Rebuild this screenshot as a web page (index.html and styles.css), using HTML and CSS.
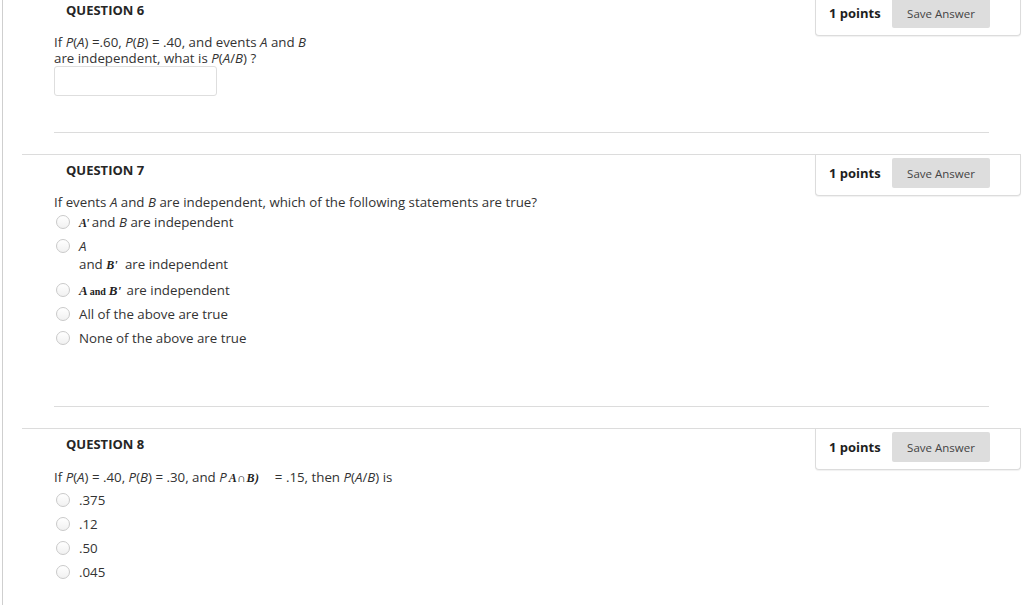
FILE: index.html
```html
<!DOCTYPE html>
<html>
<head>
<meta charset="utf-8">
<link rel="stylesheet" href="styles.css">
</head>
<body>
<div class="page">
  <section class="question first">
    <div class="q-head">
      <h2 class="q-title">QUESTION 6</h2>
      <div class="points"><span class="pts">1 points</span><button class="save">Save Answer</button></div>
    </div>
    <div class="q-body">
      <p class="q-text">If <i>P</i>(<i>A</i>) =.60, <i>P</i>(<i>B</i>) = .40, and events <i>A</i> and <i>B</i><br>are independent, what is <i>P</i>(<i>A</i>/<i>B</i>) ?</p>
      <div class="answer-input"></div>
    </div>
    <hr class="sep">
  </section>

  <section class="question">
    <div class="q-head">
      <h2 class="q-title">QUESTION 7</h2>
      <div class="points"><span class="pts">1 points</span><button class="save">Save Answer</button></div>
    </div>
    <div class="q-body">
      <p class="q-text">If events <i>A</i> and <i>B</i> are independent, which of the following statements are true?</p>
      <ul class="options">
        <li class="opt"><span class="radio"></span><span class="opt-text"><span class="m m1">A'</span> and <i>B</i> are independent</span></li>
        <li class="opt"><span class="radio"></span><span class="opt-text"><span class="line-a"><i>A</i></span><span class="line-b">and <span class="m m2">B'</span> are independent</span></span></li>
        <li class="opt"><span class="radio"></span><span class="opt-text"><span class="m m3">A<span class="m-and">and</span>B'</span> are independent</span></li>
        <li class="opt"><span class="radio"></span><span class="opt-text">All of the above are true</span></li>
        <li class="opt"><span class="radio"></span><span class="opt-text">None of the above are true</span></li>
      </ul>
    </div>
    <hr class="sep">
  </section>

  <section class="question">
    <div class="q-head">
      <h2 class="q-title">QUESTION 8</h2>
      <div class="points"><span class="pts">1 points</span><button class="save">Save Answer</button></div>
    </div>
    <div class="q-body">
      <p class="q-text tall">If <i>P</i>(<i>A</i>) = .40, <i>P</i>(<i>B</i>) = .30, and <i>P</i><span class="m m4">A∩B)</span> = .15, then <i>P</i>(<i>A</i>/<i>B</i>) is</p>
      <ul class="options">
        <li class="opt"><span class="radio"></span><span class="opt-text">.375</span></li>
        <li class="opt"><span class="radio"></span><span class="opt-text">.12</span></li>
        <li class="opt"><span class="radio"></span><span class="opt-text">.50</span></li>
        <li class="opt"><span class="radio"></span><span class="opt-text">.045</span></li>
      </ul>
    </div>
  </section>
</div>
</body>
</html>
```

FILE: styles.css
```css
html, body {
  margin: 0;
  padding: 0;
  background: #fff;
}
body {
  font-family: "Open Sans", "Liberation Sans", sans-serif;
  font-size: 13.3px;
  color: #333;
  overflow: hidden;
}
.page {
  margin-left: 2px;
  border-left: 1px solid #cfcfcf;
  min-height: 640px;
}
.question {
  margin: 0 3px 0 19px;
  border-top: 1px solid #dcdcdc;
}
.question.first {
  margin-top: -6px;
}
.q-head {
  display: flex;
  justify-content: space-between;
  align-items: flex-start;
  height: 39px;
}
.q-title {
  margin: 0;
  padding: 6px 0 0 44px;
  font-size: 13px;
  line-height: 18px;
  font-weight: 700;
  color: #262626;
}
.points {
  box-sizing: border-box;
  width: 206px;
  height: 41px;
  display: flex;
  justify-content: space-between;
  align-items: flex-start;
  padding: 3px 30px 0 13px;
  border: 1px solid #dcdcdc;
  border-top: none;
  border-radius: 0 0 4px 4px;
  box-shadow: 0 1px 1px rgba(0, 0, 0, 0.06);
  background: #fff;
  position: relative;
}
.pts {
  font-size: 13px;
  font-weight: 700;
  line-height: 30px;
  color: #1e1e1e;
}
.save {
  width: 98px;
  height: 30px;
  border: none;
  border-radius: 2px;
  background: #dddddd;
  color: #444;
  font-family: "Open Sans", "Liberation Sans", sans-serif;
  font-size: 11.5px;
  padding: 0;
}
.q-body {
  margin: 0 32px;
  padding-bottom: 36px;
}
.q-text {
  margin: 0;
  line-height: 16px;
}
.q-text.tall {
  padding: 1px 0 3px;
}
.answer-input {
  box-sizing: border-box;
  width: 163px;
  height: 30px;
  border: 1px solid #dedede;
  border-radius: 3px;
}
.options {
  list-style: none;
  margin: 0 0 20px;
  padding: 0;
}
.opt {
  display: flex;
  align-items: flex-start;
  padding: 4px 0 4px 2px;
  line-height: 16px;
  height: 16px;
}
.opt:nth-child(2) {
  height: auto;
}
.radio {
  flex: none;
  box-sizing: border-box;
  width: 14px;
  height: 14px;
  margin: 1px 9px 0 0;
  border: 1px solid #cacaca;
  border-radius: 50%;
  background: linear-gradient(#ffffff, #f1f1f1);
}
.opt-text {
  display: block;
}
.line-a, .line-b {
  display: block;
}
.line-a { line-height: 16px; height: 16px; }
.line-b { line-height: 20px; height: 20px; }
.m {
  font-family: "Liberation Serif", "DejaVu Serif", serif;
  font-weight: 700;
  font-style: italic;
  color: #222;
  line-height: 10px;
}
.m1 {
  font-size: 12px;
  letter-spacing: -1px;
}
.m2 {
  font-size: 12px;
  margin: 0 4px 0 0;
}
.m3 {
  font-size: 13px;
  margin-right: 2px;
}
.m-and {
  font-style: normal;
  font-size: 10px;
  margin: 0 3px 0 2px;
}
.m4 {
  font-size: 12px;
  letter-spacing: 0.5px;
  margin: 0 12px 0 2px;
}
.sep {
  margin: 0 32px 21px;
  border: none;
  border-top: 1px solid #dcdcdc;
  height: 0;
}
```
